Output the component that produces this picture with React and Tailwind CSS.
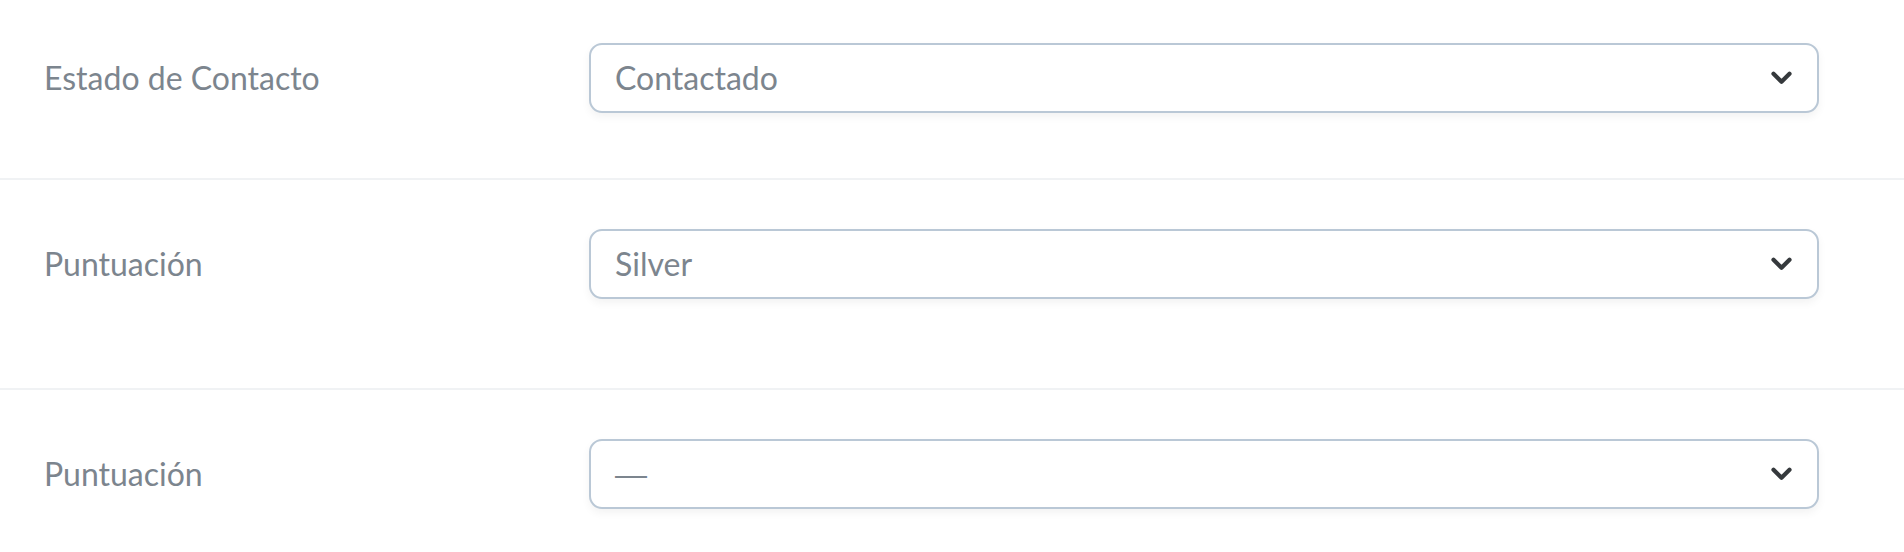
import { useState } from 'react';

const rows = [
  { label: 'Estado de Contacto', value: 'Contactado', pad: 'pt-[43px] pb-[65px]', border: true },
  { label: 'Puntuación', value: 'Silver', pad: 'pt-[49px] pb-[89px]', border: true },
  { label: 'Puntuación', value: '—', pad: 'pt-[49px] pb-[43px]', border: false },
];

function Chevron() {
  return (
    <svg width="21" height="14" viewBox="0 0 21 14" className="shrink-0">
      <path d="M2.5 2.8 L10.5 10.8 L18.5 2.8" fill="none" stroke="#35393c" strokeWidth="4.2" strokeLinecap="round" strokeLinejoin="round" />
    </svg>
  );
}

function SelectField({ value }) {
  const [v] = useState(value);
  const isDash = v === '—';
  return (
    <div className="w-[1230px] h-[70px] flex items-center justify-between pl-[24px] pr-[25px] bg-white border-2 border-[#bac8d6] rounded-[13px] shadow-[0_4px_8px_0_rgba(0,0,0,0.05)]">
      {isDash ? (
        <span className="text-[32px] leading-none text-[#7c858e] font-['Liberation_Sans',sans-serif]">{v}</span>
      ) : (
        <span className="text-[32px] leading-none text-[#7c858e]">{v}</span>
      )}
      <Chevron />
    </div>
  );
}

export default function App() {
  return (
    <div className="w-[1904px] h-[552px] overflow-hidden bg-white font-['Lato','Noto_Sans',sans-serif]">
      {rows.map((r, i) => (
        <div key={i} className={`flex ${r.pad} ${r.border ? 'border-b-2 border-[#f0f2f4]' : ''}`}>
          <div className="w-[589px] pl-[44px] h-[70px] flex items-center">
            <span className="text-[32px] leading-none text-[#7c858e]">{r.label}</span>
          </div>
          <SelectField value={r.value} />
        </div>
      ))}
    </div>
  );
}
